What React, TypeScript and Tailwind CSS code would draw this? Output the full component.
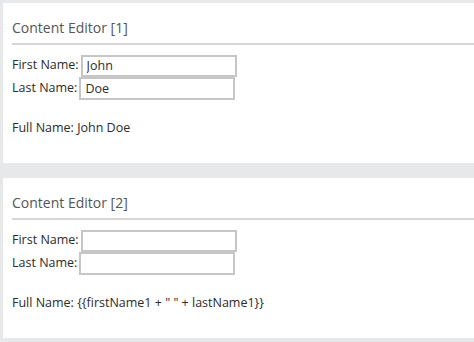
const font = { fontFamily: '"Open Sans", "Noto Sans", sans-serif' };

type EditorProps = {
  index: number;
  first: string;
  last: string;
  fullName: string;
};

const ContentEditor = ({ index, first, last, fullName }: EditorProps) => {
  return (
    <div className="bg-white h-[160px] pl-[9px]">
      <div className="pt-[15px] pb-[5px] border-b-2 border-[#d6d6d6]">
        <h2 className="text-[14px] leading-[20px] text-[#555555]">Content Editor [{index}]</h2>
      </div>

      <div className="mt-[9px] text-[12.5px] text-[#2b2b2b]">
        <div className="flex items-center h-[23px]">
          <span>First Name:</span>
          <input
            readOnly
            value={first}
            className="ml-[2px] w-[156px] h-[22px] border-2 border-[#c6c6c6] px-[4px] text-[12.5px] text-[#2b2b2b] outline-none"
            style={font}
          />
        </div>
        <div className="flex items-center h-[23px]">
          <span>Last Name:</span>
          <input
            readOnly
            value={last}
            className="ml-[2px] w-[156px] h-[23px] border-2 border-[#c6c6c6] px-[4px] text-[12.5px] text-[#2b2b2b] outline-none"
            style={font}
          />
        </div>

        <p className="mt-[19px] leading-[18px]">Full Name: {fullName}</p>
      </div>
    </div>
  );
};

export default function App() {
  return (
    <div className="min-h-screen bg-[#e7e8e9] pt-[3px] pl-[3px] pb-[4px]" style={font}>
      <ContentEditor index={1} first="John" last="Doe" fullName="John Doe" />
      <div className="h-[15px]" />
      <ContentEditor index={2} first="" last="" fullName={'{{firstName1 + " " + lastName1}}'} />
    </div>
  );
}
